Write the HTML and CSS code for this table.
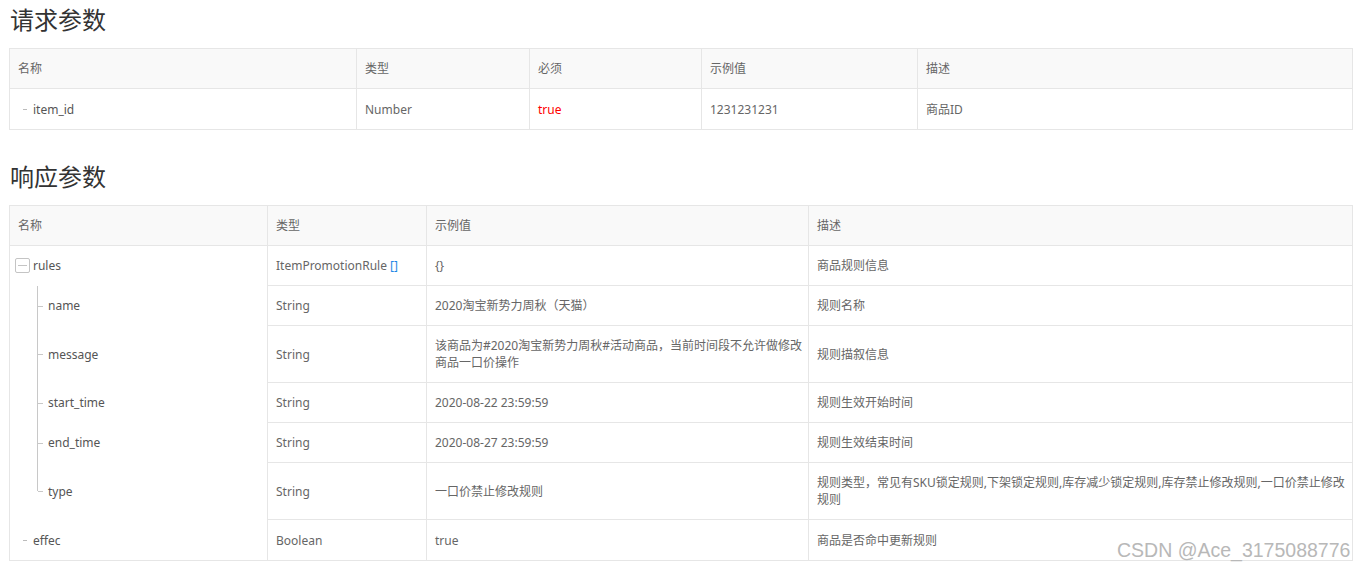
FILE: index.html
```html
<!DOCTYPE html>
<html lang="zh">
<head>
<meta charset="utf-8">
<title>参数</title>
<link rel="stylesheet" href="styles.css">
</head>
<body>
<div class="page">
  <h2 class="title first">请求参数</h2>
  <table class="params req">
    <colgroup>
      <col style="width:347px"><col style="width:173px"><col style="width:172px"><col style="width:216px"><col>
    </colgroup>
    <thead>
      <tr><th>名称</th><th>类型</th><th>必须</th><th>示例值</th><th>描述</th></tr>
    </thead>
    <tbody>
      <tr class="end">
        <td class="name"><span class="node leaf"><span class="dash"></span>item_id</span></td>
        <td>Number</td>
        <td class="req-true">true</td>
        <td>1231231231</td>
        <td>商品ID</td>
      </tr>
    </tbody>
  </table>

  <h2 class="title second">响应参数</h2>
  <table class="params resp">
    <colgroup>
      <col style="width:258px"><col style="width:159px"><col style="width:382px"><col>
    </colgroup>
    <thead>
      <tr><th>名称</th><th>类型</th><th>示例值</th><th>描述</th></tr>
    </thead>
    <tbody>
      <tr>
        <td class="name"><span class="node"><span class="toggle"></span>rules</span></td>
        <td>ItemPromotionRule <span class="link">[]</span></td>
        <td>{}</td>
        <td>商品规则信息</td>
      </tr>
      <tr>
        <td class="name child">name</td>
        <td>String</td>
        <td>2020淘宝新势力周秋（天猫）</td>
        <td>规则名称</td>
      </tr>
      <tr>
        <td class="name child">message</td>
        <td>String</td>
        <td>该商品为#2020淘宝新势力周秋#活动商品，当前时间段不允许做修改商品一口价操作</td>
        <td>规则描叙信息</td>
      </tr>
      <tr>
        <td class="name child">start_time</td>
        <td>String</td>
        <td>2020-08-22 23:59:59</td>
        <td>规则生效开始时间</td>
      </tr>
      <tr>
        <td class="name child">end_time</td>
        <td>String</td>
        <td>2020-08-27 23:59:59</td>
        <td>规则生效结束时间</td>
      </tr>
      <tr>
        <td class="name child last">type</td>
        <td>String</td>
        <td>一口价禁止修改规则</td>
        <td>规则类型，常见有SKU锁定规则,下架锁定规则,库存减少锁定规则,库存禁止修改规则,一口价禁止修改规则</td>
      </tr>
      <tr class="end">
        <td class="name"><span class="node leaf"><span class="dash"></span>effec</span></td>
        <td>Boolean</td>
        <td>true</td>
        <td>商品是否命中更新规则</td>
      </tr>
    </tbody>
  </table>
</div>
<div class="watermark">CSDN @Ace_3175088776</div>
</body>
</html>
```

FILE: styles.css
```css
html, body {
  margin: 0;
  padding: 0;
  background: #fff;
}
body {
  font-family: "Noto Sans", "Noto Sans CJK SC", sans-serif;
  color: #666;
  font-size: 12px;
}
.page {
  width: 1344px;
  margin-left: 9px;
}
.title {
  margin: 0;
  font-weight: normal;
  font-size: 24px;
  line-height: 36px;
  color: #333;
  padding-left: 1px;
  font-family: "Noto Sans CJK SC", sans-serif;
}
.title.first {
  margin-top: 1px;
  margin-bottom: 11px;
}
.title.second {
  margin-top: 28px;
  margin-bottom: 11px;
}
.params {
  width: 1344px;
  border-collapse: collapse;
  table-layout: fixed;
  border: 1px solid #e6e6e6;
}
.params th,
.params td {
  border: 1px solid #e6e6e6;
  padding: 11px 3px 11px 8px;
  height: 17px;
  line-height: 17px;
  text-align: left;
  vertical-align: middle;
  font-weight: normal;
  color: #666;
}
.params th {
  background: #f9f9f9;
}
.params tr.end td {
  padding-top: 12px;
}
.req-true {
  color: #f00 !important;
}
.link {
  color: #1e88e5;
}
.resp td.name {
  border-top: none;
  border-bottom: none;
}
.resp tr.end td.name {
  border-bottom: 1px solid #e6e6e6;
}
td.name {
  padding-left: 5px;
  color: #555;
}
.node {
  display: flex;
  align-items: center;
  gap: 3px;
  height: 17px;
  line-height: 17px;
}
.toggle {
  display: block;
  flex: none;
  box-sizing: border-box;
  width: 15px;
  height: 15px;
  border: 1px solid #c4c4c4;
  border-radius: 2px;
  position: relative;
}
.toggle::after {
  content: "";
  position: absolute;
  left: 2px;
  right: 2px;
  top: 6px;
  height: 1px;
  background: #c4c4c4;
}
.dash {
  display: block;
  flex: none;
  width: 15px;
  height: 1px;
  position: relative;
}
.dash::after {
  content: "";
  position: absolute;
  left: 8px;
  width: 4px;
  top: 0;
  height: 1px;
  background: #bbb;
}
td.child {
  position: relative;
  padding-left: 38px;
}
td.child::before {
  content: "";
  position: absolute;
  left: 27px;
  top: 0;
  bottom: 0;
  width: 1px;
  background: #c8c8c8;
}
td.child.last::before {
  bottom: 50%;
}
td.child::after {
  content: "";
  position: absolute;
  left: 28px;
  width: 5px;
  top: 50%;
  height: 1px;
  background: #c8c8c8;
}
.watermark {
  position: absolute;
  left: 1117px;
  top: 538px;
  font-family: "Liberation Sans", Arial, sans-serif;
  font-size: 19.5px;
  line-height: 24px;
  color: #b8b8b8;
  letter-spacing: 0;
}
```
